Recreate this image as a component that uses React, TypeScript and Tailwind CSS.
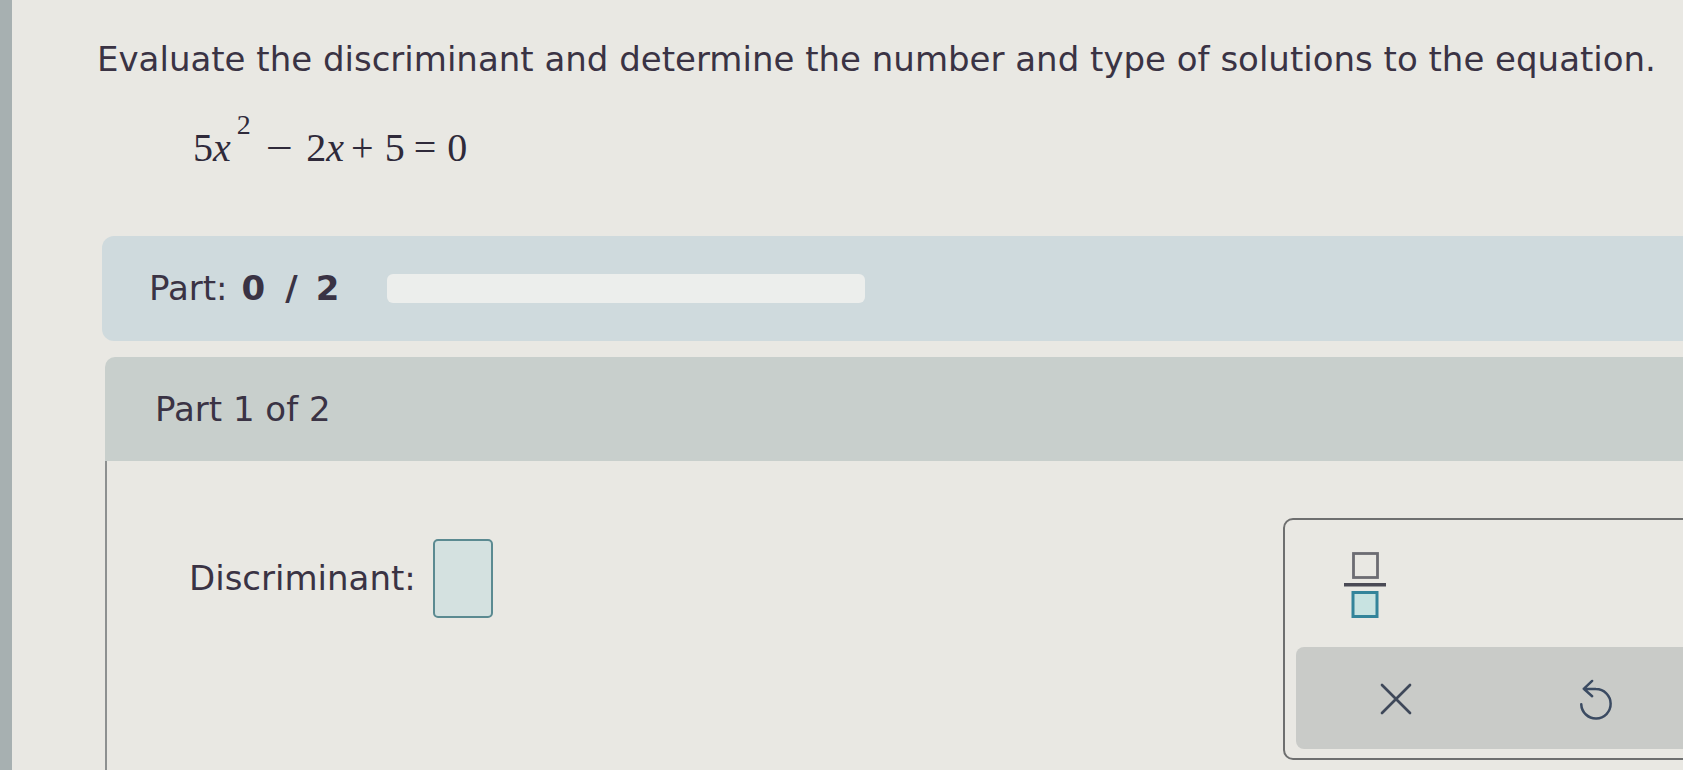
import React from "react";

const sans = { fontFamily: '"DejaVu Sans", Verdana, sans-serif' };

function FractionIcon() {
  return (
    <svg width="44" height="66" viewBox="0 0 44 66" fill="none">
      <rect x="9.5" y="1.5" width="24" height="24" stroke="#6c6c72" strokeWidth="2.8" />
      <rect x="0" y="31" width="42" height="3.5" fill="#4a4a55" />
      <rect x="9" y="40.5" width="24" height="24" fill="#c8e3e1" stroke="#33849a" strokeWidth="3" />
    </svg>
  );
}

function XIcon() {
  return (
    <svg width="32" height="32" viewBox="0 0 32 32" fill="none">
      <path d="M2 2 L30 30 M30 2 L2 30" stroke="#3e4859" strokeWidth="2.7" strokeLinecap="round" />
    </svg>
  );
}

function UndoIcon() {
  return (
    <svg width="37" height="44" viewBox="0 0 34 40" fill="none">
      <path
        d="M13 2.5 L5.3 9.7 L13 16.5 M5.3 9.7 L16.5 10 A13.5 13.5 0 1 1 3 24"
        stroke="#3b4b62"
        strokeWidth="2.3"
        strokeLinecap="round"
        strokeLinejoin="round"
      />
    </svg>
  );
}

export default function App() {
  return (
    <div className="w-[1683px] h-[770px] overflow-hidden flex bg-[#e9e8e3] text-[#3a3344]" style={sans}>
      <div className="w-[12px] shrink-0 bg-[#a7b0b1]" />
      <div className="flex-1 flex flex-col pl-[85px] pt-[39px] min-w-0">
        <div className="text-[34px] leading-[40px] whitespace-nowrap">
          Evaluate the discriminant and determine the number and type of solutions to the equation.
        </div>

        <div
          className="mt-[47px] ml-[96px] h-[44px] flex items-baseline text-[40px] leading-[44px] text-[#2f2a3a]"
          style={{ fontFamily: '"Liberation Serif", "Times New Roman", serif' }}
        >
          <span>5</span>
          <span className="italic">x</span>
          <span className="relative -top-[27px] text-[28px] ml-[6px]">2</span>
          <span className="ml-[17px] scale-x-[1.2]">−</span>
          <span className="ml-[16px]">2</span>
          <span className="italic">x</span>
          <span className="ml-[7px]">+</span>
          <span className="ml-[11px]">5</span>
          <span className="ml-[9px]">=</span>
          <span className="ml-[11px]">0</span>
        </div>

        <div className="mt-[66px] ml-[5px] h-[105px] w-[1700px] shrink-0 rounded-l-[12px] bg-[#cfdadd] flex items-center pl-[47px]">
          <div className="text-[34px] whitespace-nowrap flex">
            <span>Part:</span>
            <span className="font-bold ml-[14px]">0</span>
            <span className="font-bold ml-[20px]">/</span>
            <span className="font-bold ml-[18px]">2</span>
          </div>
          <div className="ml-[48px] w-[478px] h-[29px] rounded-[6px] bg-[#eceeec]" />
        </div>

        <div className="mt-[16px] ml-[8px] w-[1700px] shrink-0 flex flex-col flex-1">
          <div className="h-[104px] rounded-tl-[10px] bg-[#c8cfcc] flex items-center pl-[50px]">
            <div className="text-[34px] whitespace-nowrap">Part 1 of 2</div>
          </div>
          <div className="flex-1 border-l-2 border-[#8d9090] flex items-start pt-[57px]">
            <div className="w-[1176px] shrink-0 mt-[21px] pl-[82px] flex items-center">
              <div className="text-[34px] whitespace-nowrap">Discriminant:</div>
              <div className="ml-[17px] w-[60px] h-[79px] rounded-[5px] border-2 border-[#5b8a91] bg-[#d4e1e0]" />
            </div>
            <div className="w-[600px] h-[242px] shrink-0 rounded-[10px] border-2 border-[#6e6f6f] flex flex-col px-[11px] pt-[32px]">
              <div className="pl-[48px] h-[66px]">
                <FractionIcon />
              </div>
              <div className="mt-[29px] h-[102px] rounded-[8px] bg-[#c9cbc8] grid grid-cols-[200px_200px] items-center">
                <div className="flex justify-center pt-[2px]">
                  <XIcon />
                </div>
                <div className="flex justify-center pt-[4px]">
                  <UndoIcon />
                </div>
              </div>
            </div>
          </div>
        </div>
      </div>
    </div>
  );
}
